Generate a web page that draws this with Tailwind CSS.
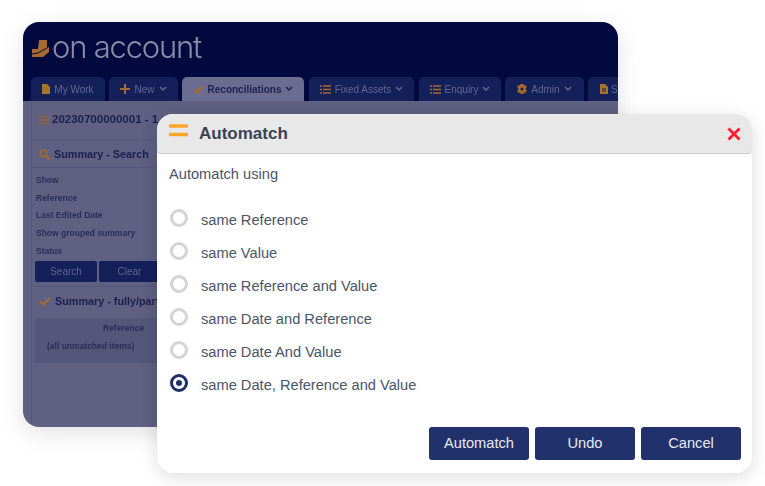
<!DOCTYPE html>
<html>
<head>
  <title>Automatch - On Account</title>
  <script src="https://cdn.jsdelivr.net/npm/@tailwindcss/browser@4"></script>
</head>
<body class="bg-white">
  <div class="relative w-[765px] h-[486px] overflow-hidden font-['Liberation_Sans',Arial,sans-serif]">

    <!-- background window -->
    <div class="absolute left-[23px] top-[22px] w-[595px] h-[405px] rounded-[16px] overflow-hidden shadow-[0_6px_24px_rgba(0,0,0,0.12)]">
    <div class="w-full h-full flex flex-col bg-[#5f6082] blur-[0.4px]">
      <div class="h-[55px] shrink-0 bg-[#02093f] flex items-center pl-[9px] pb-[6px] gap-[3px]">
        <svg width="17" height="18" viewBox="0 0 17 18" class="mt-[5px]">
          <path d="M7 0h8v8l2-1v5l-6 5H0v-8h6z" fill="#a8692c"/>
          <path d="M0 14l6-1 9-5" stroke="#02093f" stroke-width="1" fill="none"/>
        </svg>
        <span class="text-[31px] leading-none text-[#8a8ca6] font-['Inter',sans-serif] font-light tracking-[-1.2px]">on account</span>
      </div>

      <!-- tabs -->
      <div class="h-[24px] shrink-0 bg-[#02093f] flex pl-[8px] gap-[4px] text-[10px] text-[#62688f] whitespace-nowrap">
        <div class="w-[74px] rounded-t-[5px] bg-[#13205a] flex items-center justify-center gap-[4px]">
          <svg width="8" height="10" viewBox="0 0 8 10"><path d="M0 0h5l3 3v7H0z" fill="#a8742f"/></svg>My Work
        </div>
        <div class="w-[69px] rounded-t-[5px] bg-[#13205a] flex items-center justify-center gap-[4px]">
          <svg width="10" height="10" viewBox="0 0 10 10"><path d="M5 0v10M0 5h10" stroke="#a8692c" stroke-width="2"/></svg>New
          <svg width="8" height="6" viewBox="0 0 8 6"><path d="M1 1l3 3 3-3" stroke="#62688f" stroke-width="1.500" fill="none"/></svg>
        </div>
        <div class="w-[122px] rounded-t-[5px] bg-[#6b6d90] text-[#1c2050] font-bold flex items-center justify-center gap-[4px]">
          <svg width="11" height="9" viewBox="0 0 11 9"><path d="M1 4.500l3 3 6-6" stroke="#a8692c" stroke-width="2" fill="none"/></svg>Reconciliations
          <svg width="8" height="6" viewBox="0 0 8 6"><path d="M1 1l3 3 3-3" stroke="#1c2050" stroke-width="1.500" fill="none"/></svg>
        </div>
        <div class="w-[105px] ml-[1px] rounded-t-[5px] bg-[#13205a] flex items-center justify-center gap-[4px]">
          <svg width="11" height="9" viewBox="0 0 11 9"><path d="M0 1h2M3 1h8M0 4.500h2M3 4.500h8M0 8h2M3 8h8" stroke="#a8692c" stroke-width="1.600"/></svg>Fixed Assets
          <svg width="8" height="6" viewBox="0 0 8 6"><path d="M1 1l3 3 3-3" stroke="#62688f" stroke-width="1.500" fill="none"/></svg>
        </div>
        <div class="w-[82px] ml-[1px] rounded-t-[5px] bg-[#13205a] flex items-center justify-center gap-[4px]">
          <svg width="11" height="9" viewBox="0 0 11 9"><path d="M0 1h2M3 1h8M0 4.500h2M3 4.500h8M0 8h2M3 8h8" stroke="#a8692c" stroke-width="1.600"/></svg>Enquiry
          <svg width="8" height="6" viewBox="0 0 8 6"><path d="M1 1l3 3 3-3" stroke="#62688f" stroke-width="1.500" fill="none"/></svg>
        </div>
        <div class="w-[79px] rounded-t-[5px] bg-[#13205a] flex items-center justify-center gap-[4px]">
          <svg width="10" height="10" viewBox="0 0 10 10"><path d="M3.500 0h3l.4 1.500 1.500-.6 1.500 2.600-1.200 1 0 1 1.200 1-1.500 2.600-1.500-.6L6.500 10h-3l-.4-1.500-1.500.6L.1 6.500l1.200-1v-1l-1.200-1 1.500-2.600 1.500.6z" fill="#a8692c"/><circle cx="5" cy="5" r="1.500" fill="#13205a"/></svg>Admin
          <svg width="8" height="6" viewBox="0 0 8 6"><path d="M1 1l3 3 3-3" stroke="#62688f" stroke-width="1.500" fill="none"/></svg>
        </div>
        <div class="flex-1 rounded-tl-[5px] bg-[#13205a] flex items-center pl-[12px] gap-[3px]">
          <svg width="8" height="10" viewBox="0 0 8 10" class="shrink-0"><path d="M0 0h5l3 3v7H0z" fill="#a8742f"/><path d="M2 5h4M2 7h4" stroke="#13205a"/></svg>S
        </div>
      </div>

      <!-- page under the overlay -->
      <div class="flex-1 ml-[8px] border-l border-[#56577c] text-[#1c2050]">
        <div class="h-[39px] border-b border-[#565780] flex items-center pl-[7px] gap-[3px] text-[11.500px] font-bold whitespace-nowrap">
          <svg width="10" height="10" viewBox="0 0 10 10"><path d="M0 1.500h10M0 5h10M0 8.500h10" stroke="#8a5f45" stroke-width="2"/></svg>20230700000001 - 1
        </div>
        <div class="h-[28px] border-b border-[#565780] flex items-center pl-[7px] pt-[1px] gap-[4px] text-[10.800px] font-bold">
          <svg width="11" height="11" viewBox="0 0 11 11"><circle cx="4.500" cy="4.500" r="3.400" stroke="#a8692c" stroke-width="1.600" fill="none"/><path d="M7 7l3.500 3.500" stroke="#a8692c" stroke-width="2"/></svg>Summary - Search
        </div>
        <div class="pl-[4px] pt-[4px] flex flex-col text-[8.500px] leading-[17.700px] font-bold text-[#2b2e58]">
          <div>Show</div>
          <div>Reference</div>
          <div>Last Edited Date</div>
          <div>Show grouped summary</div>
          <div>Status</div>
        </div>
        <div class="pl-[3px] flex gap-[2px] text-[10px] text-[#5d6590]">
          <div class="w-[62px] h-[21px] bg-[#13205a] rounded-[2px] flex items-center justify-center">Search</div>
          <div class="w-[61px] h-[21px] bg-[#13205a] rounded-[2px] flex items-center justify-center">Clear</div>
        </div>
        <div class="mt-[4px] h-[29px] border-t border-[#565780] flex items-center pl-[7px] pt-[1px] gap-[4px] text-[10.800px] font-bold">
          <svg width="12" height="9" viewBox="0 0 12 9"><path d="M1 4.500l3 3 7-6.500" stroke="#a8692c" stroke-width="2" fill="none"/></svg>Summary - fully/part
        </div>
        <div class="ml-[3px] mt-[3px] h-[45px] bg-[#54567a] text-[8.500px] font-bold text-[#2b2e58]">
          <div class="pl-[68px] pt-[5px] leading-[11px]">Reference</div>
          <div class="pl-[12px] pt-[7px] leading-[11px]">(all unmatched items)</div>
        </div>
      </div>
    </div>
    </div>

    <!-- modal -->
    <div class="absolute left-[157px] top-[114px] w-[595px] h-[359px] rounded-[16px] bg-white flex flex-col shadow-[0_4px_18px_rgba(0,0,0,0.14)]">
      <div class="h-[40px] shrink-0 bg-[#e8e8e8] rounded-t-[16px] rounded-b-[4px] border-b border-[#c8c8c8] flex items-center pl-[12px] pr-[11px] mb-[1px]">
        <svg width="20" height="14" viewBox="0 0 20 14" class="-mt-[5px]"><path d="M0 2h19M0 10.500h19" stroke="#ffa726" stroke-width="3.400"/></svg>
        <span class="ml-[10px] pt-[1px] text-[17px] font-bold text-[#3a4354]">Automatch</span>
        <svg width="14" height="14" viewBox="0 0 14 14" class="ml-auto"><path d="M1.500 1.500l11 11M12.500 1.500l-11 11" stroke="#ff1a2e" stroke-width="2.800"/></svg>
      </div>

      <div class="px-[12px] pt-[9px] text-[14.650px] leading-[20px] text-[#4a5568]">Automatch using</div>

      <div class="mt-[20px] flex flex-col text-[14.650px] text-[#4a5568]">
        <label class="h-[33px] flex items-center pl-[13px] gap-[13px]"><span class="w-[18px] h-[18px] -mt-[5px] rounded-full border-[3px] border-[#d4d4d4] bg-white"></span>same Reference</label>
        <label class="h-[33px] flex items-center pl-[13px] gap-[13px]"><span class="w-[18px] h-[18px] -mt-[5px] rounded-full border-[3px] border-[#d4d4d4] bg-white"></span>same Value</label>
        <label class="h-[33px] flex items-center pl-[13px] gap-[13px]"><span class="w-[18px] h-[18px] -mt-[5px] rounded-full border-[3px] border-[#d4d4d4] bg-white"></span>same Reference and Value</label>
        <label class="h-[33px] flex items-center pl-[13px] gap-[13px]"><span class="w-[18px] h-[18px] -mt-[5px] rounded-full border-[3px] border-[#d4d4d4] bg-white"></span>same Date and Reference</label>
        <label class="h-[33px] flex items-center pl-[13px] gap-[13px]"><span class="w-[18px] h-[18px] -mt-[5px] rounded-full border-[3px] border-[#d4d4d4] bg-white"></span>same Date And Value</label>
        <label class="h-[33px] flex items-center pl-[13px] gap-[13px]"><span class="w-[18px] h-[18px] -mt-[5px] rounded-full border-[3px] border-[#1f3068] bg-white flex items-center justify-center"><span class="w-[6px] h-[6px] rounded-full bg-[#1f3068]"></span></span>same Date, Reference and Value</label>
      </div>

      <div class="mt-auto mb-[13px] pr-[11px] flex justify-end gap-[6px] text-[14.650px] text-[#e8eaf2]">
        <button class="w-[100px] h-[33px] rounded-[3px] bg-[#20316b]">Automatch</button>
        <button class="w-[100px] h-[33px] rounded-[3px] bg-[#20316b]">Undo</button>
        <button class="w-[100px] h-[33px] rounded-[3px] bg-[#20316b]">Cancel</button>
      </div>
    </div>
  </div>
</body>
</html>
